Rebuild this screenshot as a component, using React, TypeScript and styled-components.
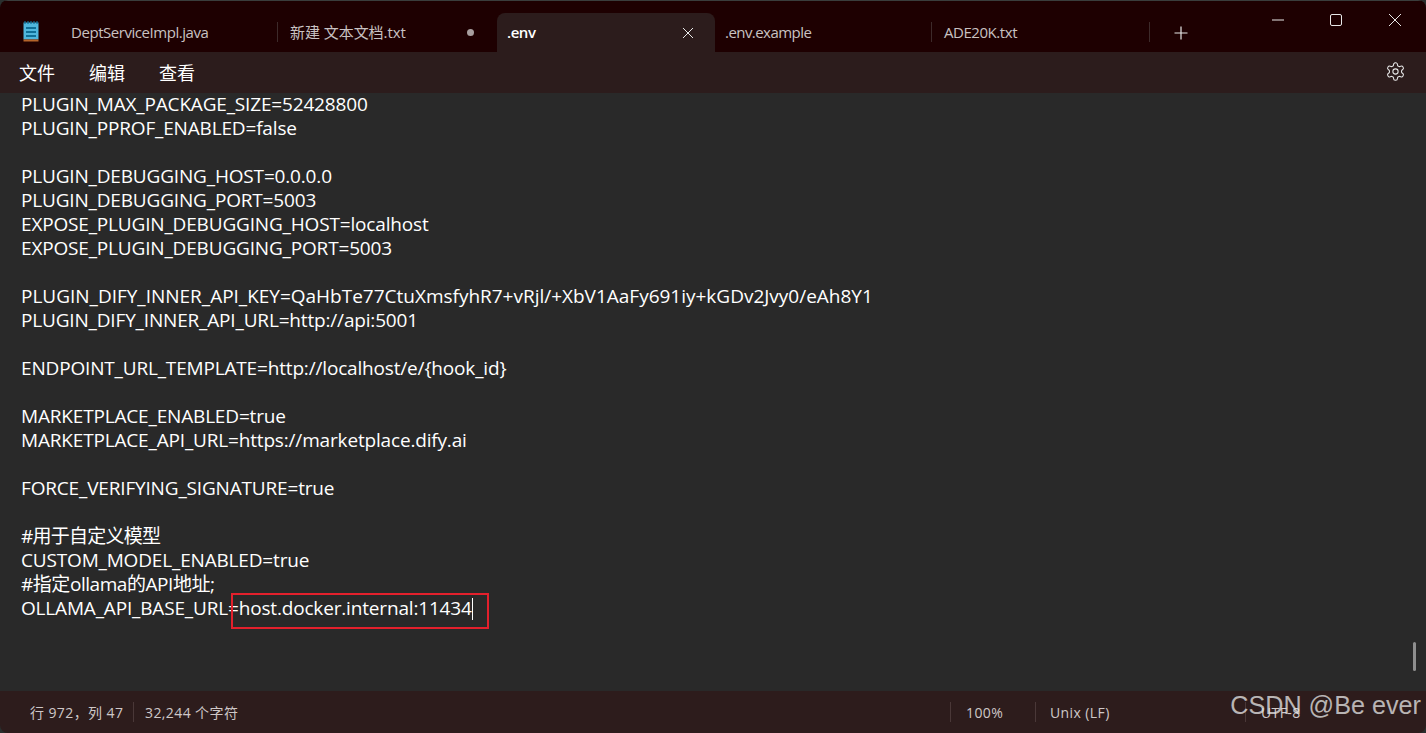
import React from "react";
import styled, { createGlobalStyle } from "styled-components";

const UI = `"Open Sans", "Noto Sans CJK SC", sans-serif`;

const Global = createGlobalStyle`
  html, body { margin: 0; padding: 0; background: #2a2f2e; height: 100%; overflow: hidden; }
  #root { height: 100%; }
`;

const Window = styled.div`
  position: relative;
  width: 1426px;
  height: 733px;
  display: flex;
  flex-direction: column;
  overflow: hidden;
  border-radius: 8px;
  font-family: ${UI};
`;

const TabBar = styled.div`
  height: 52px;
  flex: none;
  background: #1e0001;
  border-top: 1px solid #3a3d3c;
  display: flex;
  align-items: flex-end;
  padding-left: 13px;
  box-sizing: border-box;
`;

const AppIcon = styled.svg`
  width: 16px;
  height: 21px;
  flex: none;
  margin: 0 0 10px 10px;
`;

const TabRow = styled.div`
  display: flex;
  align-items: flex-end;
  margin-left: 32px;
`;

const Tab = styled.div<{ $active?: boolean; $width: number; $sep?: boolean; $pad: number; $tracking?: number }>`
  position: relative;
  width: ${(p) => p.$width}px;
  height: 39px;
  box-sizing: border-box;
  padding-left: ${(p) => p.$pad}px;
  padding-bottom: 2px;
  display: flex;
  align-items: center;
  font-size: 15px;
  letter-spacing: ${(p) => p.$tracking ?? -0.45}px;
  color: ${(p) => (p.$active ? "#ffffff" : "#c9c2c2")};
  font-weight: ${(p) => (p.$active ? 600 : 400)};
  background: ${(p) => (p.$active ? "#2c1c1c" : "transparent")};
  border-radius: ${(p) => (p.$active ? "8px 8px 0 0" : "0")};
  ${(p) =>
    p.$sep
      ? `&::after { content: ""; position: absolute; right: 0; top: 9px; height: 20px; width: 1px; background: #3d2a2a; }`
      : ""}
`;

const Dot = styled.span`
  position: absolute;
  left: 189px;
  top: 16px;
  width: 7px;
  height: 7px;
  border-radius: 50%;
  background: #a89f9f;
`;

const TabClose = styled.svg`
  position: absolute;
  left: 185px;
  top: 14px;
  width: 12px;
  height: 12px;
`;

const Plus = styled.svg`
  width: 14px;
  height: 14px;
  margin: 0 0 12px 24px;
  flex: none;
`;

const WinControls = styled.div`
  position: absolute;
  top: 0;
  right: 2px;
  display: flex;
`;

const WinButton = styled.div`
  width: 58.5px;
  height: 39px;
  display: flex;
  align-items: center;
  justify-content: center;
`;

const MenuBar = styled.div`
  height: 41px;
  flex: none;
  background: #2c1c1c;
  display: flex;
  align-items: center;
  padding: 0 19px 2px;
  box-sizing: border-box;
  gap: 34px;
  position: relative;
`;

const MenuItem = styled.span`
  color: #ffffff;
  font-size: 18px;
  font-family: "Noto Sans CJK SC", sans-serif;
`;

const Gear = styled.svg`
  margin-left: auto;
  width: 21px;
  height: 21px;
  margin-right: 1px;
`;

const Editor = styled.div`
  flex: 1;
  background: #292929;
  position: relative;
  padding-left: 21px;
  box-sizing: border-box;
`;

const Lines = styled.div`
  margin-top: -1px;
`;

const Line = styled.div<{ $tracking?: number }>`
  height: 24px;
  line-height: 24px;
  font-size: 19px;
  letter-spacing: ${(p) => p.$tracking ?? -0.17}px;
  color: #ffffff;
  white-space: pre;
`;

const Caret = styled.span`
  display: inline-block;
  width: 1px;
  height: 22px;
  background: #ffffff;
  vertical-align: -5px;
`;

const Highlight = styled.div`
  position: absolute;
  left: 231px;
  top: 500px;
  width: 258px;
  height: 36px;
  box-sizing: border-box;
  border: 2px solid #e3202c;
`;

const ScrollThumb = styled.div`
  position: absolute;
  right: 10px;
  top: 549px;
  width: 3px;
  height: 29px;
  border-radius: 2px;
  background: #8e8e8e;
`;

const StatusBar = styled.div`
  height: 42px;
  flex: none;
  background: #2d1c1c;
  display: flex;
  align-items: center;
  font-size: 14px;
  letter-spacing: 0.4px;
  color: #cfc8c8;
`;

const StatusCell = styled.div<{ $width: number; $pad: number; $sep?: boolean }>`
  width: ${(p) => p.$width}px;
  height: 20px;
  line-height: 21px;
  flex: none;
  box-sizing: border-box;
  padding-left: ${(p) => p.$pad}px;
  white-space: nowrap;
  ${(p) => (p.$sep ? "border-right: 1px solid #4a3838;" : "")}
`;

const Spacer = styled.div`
  flex: 1;
  height: 20px;
  border-right: 1px solid #4a3838;
`;

const Watermark = styled.div`
  position: absolute;
  right: 5px;
  top: 689px;
  font-family: "Liberation Sans", sans-serif;
  font-size: 25.2px;
  line-height: 32px;
  color: rgba(225, 225, 225, 0.78);
  white-space: nowrap;
`;

const lines: { text: string; tracking?: number }[] = [
  { text: "PLUGIN_MAX_PACKAGE_SIZE=52428800" },
  { text: "PLUGIN_PPROF_ENABLED=false" },
  { text: "" },
  { text: "PLUGIN_DEBUGGING_HOST=0.0.0.0" },
  { text: "PLUGIN_DEBUGGING_PORT=5003" },
  { text: "EXPOSE_PLUGIN_DEBUGGING_HOST=localhost" },
  { text: "EXPOSE_PLUGIN_DEBUGGING_PORT=5003" },
  { text: "" },
  { text: "PLUGIN_DIFY_INNER_API_KEY=QaHbTe77CtuXmsfyhR7+vRjl/+XbV1AaFy691iy+kGDv2Jvy0/eAh8Y1", tracking: -0.01 },
  { text: "PLUGIN_DIFY_INNER_API_URL=http://api:5001" },
  { text: "" },
  { text: "ENDPOINT_URL_TEMPLATE=http://localhost/e/{hook_id}" },
  { text: "" },
  { text: "MARKETPLACE_ENABLED=true" },
  { text: "MARKETPLACE_API_URL=https://marketplace.dify.ai" },
  { text: "" },
  { text: "FORCE_VERIFYING_SIGNATURE=true" },
  { text: "" },
  { text: "#用于自定义模型", tracking: -0.75 },
  { text: "CUSTOM_MODEL_ENABLED=true" },
  { text: "#指定ollama的API地址;", tracking: -0.45 },
];

export default function App() {
  return (
    <Window>
      <Global />
      <TabBar>
        <AppIcon viewBox="0 0 16 21">
          <rect x="0.5" y="1.5" width="15" height="17" fill="#4fb6dc" />
          <rect x="0.5" y="18.5" width="15" height="2" fill="#b5642a" />
          <rect x="3" y="6" width="10" height="2" fill="#0f6f96" />
          <rect x="3" y="10" width="10" height="2" fill="#0f6f96" />
          <rect x="3" y="14" width="10" height="2" fill="#0f6f96" />
          <path d="M2 0v3M5 0v3M8 0v3M11 0v3M14 0v3" stroke="#0f6f96" strokeWidth="1.2" />
        </AppIcon>
        <TabRow>
          <Tab $width={207} $pad={0} $sep>DeptServiceImpl.java</Tab>
          <Tab $width={219} $pad={12} $tracking={-0.05}>
            新建 文本文档.txt
            <Dot />
          </Tab>
          <Tab $width={218} $pad={10} $active>
            .env
            <TabClose viewBox="0 0 12 12">
              <path d="M1 1l10 10M11 1L1 11" stroke="#e8e8e8" strokeWidth="1" fill="none" />
            </TabClose>
          </Tab>
          <Tab $width={217} $pad={10} $sep $tracking={-0.55}>.env.example</Tab>
          <Tab $width={218} $pad={12} $sep>ADE20K.txt</Tab>
        </TabRow>
        <Plus viewBox="0 0 14 14">
          <path d="M7 0.5v13M0.5 7h13" stroke="#e8e8e8" strokeWidth="1.2" fill="none" />
        </Plus>
      </TabBar>
      <WinControls>
        <WinButton>
          <svg width="12" height="2" viewBox="0 0 12 2"><path d="M0 1h12" stroke="#e8e8e8" strokeWidth="1" /></svg>
        </WinButton>
        <WinButton>
          <svg width="12" height="12" viewBox="0 0 12 12"><rect x="0.5" y="0.5" width="11" height="11" rx="1.5" fill="none" stroke="#e8e8e8" strokeWidth="1" /></svg>
        </WinButton>
        <WinButton>
          <svg width="14" height="14" viewBox="0 0 14 14"><path d="M1 1l12 12M13 1L1 13" stroke="#e8e8e8" strokeWidth="1" fill="none" /></svg>
        </WinButton>
      </WinControls>
      <MenuBar>
        <MenuItem>文件</MenuItem>
        <MenuItem>编辑</MenuItem>
        <MenuItem>查看</MenuItem>
        <Gear viewBox="0 0 24 24" fill="none" stroke="#e8e8e8" strokeWidth="1.2" strokeLinecap="round" strokeLinejoin="round">
          <path d="M12.22 2h-.44a2 2 0 0 0-2 2v.18a2 2 0 0 1-1 1.73l-.43.25a2 2 0 0 1-2 0l-.15-.08a2 2 0 0 0-2.73.73l-.22.38a2 2 0 0 0 .73 2.73l.15.1a2 2 0 0 1 1 1.72v.51a2 2 0 0 1-1 1.74l-.15.09a2 2 0 0 0-.73 2.73l.22.38a2 2 0 0 0 2.73.73l.15-.08a2 2 0 0 1 2 0l.43.25a2 2 0 0 1 1 1.73V20a2 2 0 0 0 2 2h.44a2 2 0 0 0 2-2v-.18a2 2 0 0 1 1-1.73l.43-.25a2 2 0 0 1 2 0l.15.08a2 2 0 0 0 2.73-.73l.22-.39a2 2 0 0 0-.73-2.73l-.15-.08a2 2 0 0 1-1-1.74v-.5a2 2 0 0 1 1-1.74l.15-.09a2 2 0 0 0 .73-2.73l-.22-.38a2 2 0 0 0-2.73-.73l-.15.08a2 2 0 0 1-2 0l-.43-.25a2 2 0 0 1-1-1.73V4a2 2 0 0 0-2-2z" />
          <circle cx="12" cy="12" r="3" />
        </Gear>
      </MenuBar>
      <Editor>
        <Lines>
          {lines.map((l, i) => (
            <Line key={i} $tracking={l.tracking}>{l.text || " "}</Line>
          ))}
          <Line>
            OLLAMA_API_BASE_URL=host.docker.internal:11434
            <Caret />
          </Line>
        </Lines>
        <Highlight />
        <ScrollThumb />
      </Editor>
      <StatusBar>
        <StatusCell $width={134} $pad={30} $sep>行 972，列 47</StatusCell>
        <StatusCell $width={120} $pad={11}>32,244 个字符</StatusCell>
        <Spacer />
        <StatusCell $width={85} $pad={15} $sep>100%</StatusCell>
        <StatusCell $width={210} $pad={14} $sep>Unix (LF)</StatusCell>
        <StatusCell $width={180} $pad={15}>UTF-8</StatusCell>
      </StatusBar>
      <Watermark>CSDN @Be ever</Watermark>
    </Window>
  );
}
